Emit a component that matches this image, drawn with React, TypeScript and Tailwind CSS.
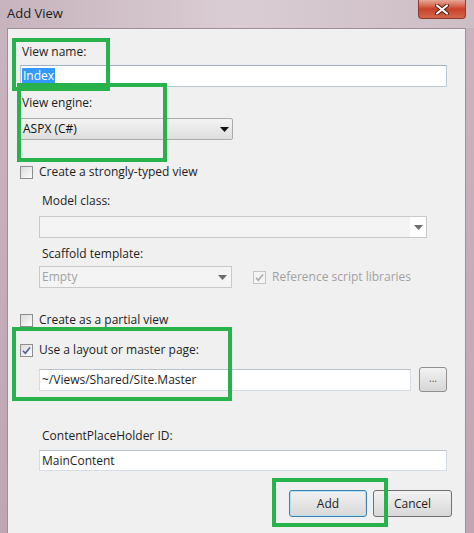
import { ReactNode } from "react";

const font = { fontFamily: '"Open Sans", "Noto Sans", sans-serif' };

function Label({ children, indent }: { children: ReactNode; indent?: boolean }) {
	return (
		<div className={`h-4 text-[12px] leading-4 text-[#1e1e1e] ${indent ? "pl-[22px]" : "pl-[2px]"}`}>
			{children}
		</div>
	);
}

function Arrow({ muted }: { muted?: boolean }) {
	return (
		<svg width="9" height="5" viewBox="0 0 9 5" className="shrink-0">
			<path d="M0 0h9L4.5 5z" fill={muted ? "#6d6d6d" : "#111"} />
		</svg>
	);
}

function Check({ checked, disabled }: { checked?: boolean; disabled?: boolean }) {
	return (
		<div
			className={`grid h-[13px] w-[13px] shrink-0 place-items-center border ${
				disabled
					? "border-[#c5c5c5] bg-[#f4f4f4]"
					: "border-[#8e8f8f] bg-gradient-to-br from-[#dcdcdc] to-[#fbfbfb]"
			}`}
		>
			{checked && (
				<svg width="9" height="9" viewBox="0 0 9 9">
					<path
						d="M1 4.8l2.3 2.4L8 1.5"
						fill="none"
						stroke={disabled ? "#a9a9a9" : "#4a5f97"}
						strokeWidth="1.6"
					/>
				</svg>
			)}
		</div>
	);
}

function GreenBox({ className }: { className: string }) {
	return <div className={`pointer-events-none absolute border-4 border-[#27b24b] ${className}`} />;
}

export default function App() {
	return (
		<div
			className="relative flex h-[533px] w-[474px] flex-col overflow-hidden bg-gradient-to-b from-[#c9b5bf] to-[#bfa6b2]"
			style={font}
		>
			{/* title bar */}
			<div className="flex h-[28px] shrink-0 items-start bg-gradient-to-r from-[#c7b3bd] via-[#dacdd3] to-[#cdbdc5]">
				<div className="pl-[7px] pt-[5px] text-[13px] leading-4 text-[#1b1b1b]">Add View</div>
				<div className="ml-auto mr-[8px] flex h-[19px] w-[48px] items-center justify-center rounded-b-[4px] border border-t-0 border-[#8e3a2e] bg-gradient-to-b from-[#e8a795] via-[#c94129] to-[#d2654c]">
					<svg width="14" height="11" viewBox="0 0 14 11">
						<path
							d="M2 1.5l10 8M12 1.5l-10 8"
							stroke="#5a1a10"
							strokeWidth="4"
							strokeLinecap="round"
						/>
						<path d="M2 1.5l10 8M12 1.5l-10 8" stroke="#fff" strokeWidth="2.2" strokeLinecap="round" />
					</svg>
				</div>
			</div>

			{/* client area */}
			<div className="ml-[7px] mr-[8px] flex flex-1 flex-col border border-b-0 border-[#9d8f96] bg-[#f0f0f0] pl-[12px] pr-[18px] pt-[15px]">
				<Label>View name:</Label>
				<div className="mt-[5px] flex h-[22px] items-center border border-[#b7c6d3] border-t-[#9fb1c1] bg-white pl-[1px]">
					<span className="bg-[#3399ff] px-[1px] text-[12px] leading-4 text-white">Index</span>
				</div>

				<div className="mt-[8px]">
					<Label>View engine:</Label>
				</div>
				<div className="mt-[7px] flex h-[22px] w-[213px] items-center justify-between rounded-[2px] border border-[#acacac] bg-gradient-to-b from-[#f3f3f3] to-[#dedede] pl-[2px] pr-[3px] text-[12px] text-[#111]">
					<span>ASPX (C#)</span>
					<Arrow />
				</div>

				<div className="mt-[24px] flex h-4 items-center gap-[6px] text-[12px] text-[#1e1e1e]">
					<Check />
					<span>Create a strongly-typed view</span>
				</div>

				<div className="mt-[13px]">
					<Label indent>Model class:</Label>
				</div>
				<div className="ml-[19px] mr-[20px] mt-[7px] flex h-[22px] items-stretch border border-[#c9c9c9] bg-[#f4f4f4]">
					<div className="flex-1" />
					<div className="flex w-[16px] items-center justify-center bg-white">
						<Arrow muted />
					</div>
				</div>

				<div className="mt-[8px]">
					<Label indent>Scaffold template:</Label>
				</div>
				<div className="mt-[4px] flex h-[22px] items-center pl-[19px]">
					<div className="flex h-[22px] w-[193px] items-center justify-between border border-[#c9c9c9] bg-[#f4f4f4] pl-[2px] pr-[4px] text-[12px] text-[#a2a2a2]">
						<span>Empty</span>
						<Arrow muted />
					</div>
					<div className="ml-[21px] flex items-center gap-[6px] text-[12px] text-[#a2a2a2]">
						<Check checked disabled />
						<span>Reference script libraries</span>
					</div>
				</div>

				<div className="mt-[24px] flex h-4 items-center gap-[6px] text-[12px] text-[#1e1e1e]">
					<Check />
					<span>Create as a partial view</span>
				</div>

				<div className="mt-[14px] flex h-4 items-center gap-[6px] text-[12px] text-[#1e1e1e]">
					<Check checked />
					<span>Use a layout or master page:</span>
				</div>

				<div className="mt-[9px] flex h-[25px] items-center pl-[19px]">
					<div className="flex h-[22px] flex-1 items-center border border-[#d5dce3] border-t-[#b9c3cc] bg-white pl-[2px] text-[12px] text-[#1e1e1e]">
						~/Views/Shared/Site.Master
					</div>
					<div className="ml-[8px] flex h-[25px] w-[28px] items-center justify-center rounded-[3px] border border-[#8f8f8f] bg-gradient-to-b from-[#f2f2f2] to-[#d6d6d6] pb-[3px] text-[10px] text-[#555]">
						...
					</div>
				</div>

				<div className="mt-[36px]">
					<Label indent>ContentPlaceHolder ID:</Label>
				</div>
				<div className="ml-[19px] mt-[6px] flex h-[21px] items-center border border-[#d5dce3] border-t-[#b9c3cc] bg-white pl-[2px] text-[12px] text-[#1e1e1e]">
					MainContent
				</div>

				<div className="-mr-[5px] mt-[19px] flex justify-end gap-[6px]">
					<div className="flex h-[27px] w-[78px] items-center justify-center rounded-[3px] border border-[#3c7fb1] bg-gradient-to-b from-[#f2f2f2] to-[#d8d8d8] text-[12px] text-[#1e1e1e] shadow-[inset_0_0_0_1px_#b5e0f6]">
						Add
					</div>
					<div className="flex h-[27px] w-[79px] items-center justify-center rounded-[3px] border border-[#707070] bg-gradient-to-b from-[#f2f2f2] to-[#d8d8d8] text-[12px] text-[#1e1e1e]">
						Cancel
					</div>
				</div>
			</div>

			{/* highlight annotations */}
			<GreenBox className="left-[12px] top-[38px] h-[53px] w-[98px]" />
			<GreenBox className="left-[17px] top-[83px] h-[79px] w-[150px]" />
			<GreenBox className="left-[12px] top-[327px] h-[74px] w-[220px]" />
			<GreenBox className="left-[272px] top-[478px] h-[49px] w-[116px]" />
		</div>
	);
}
